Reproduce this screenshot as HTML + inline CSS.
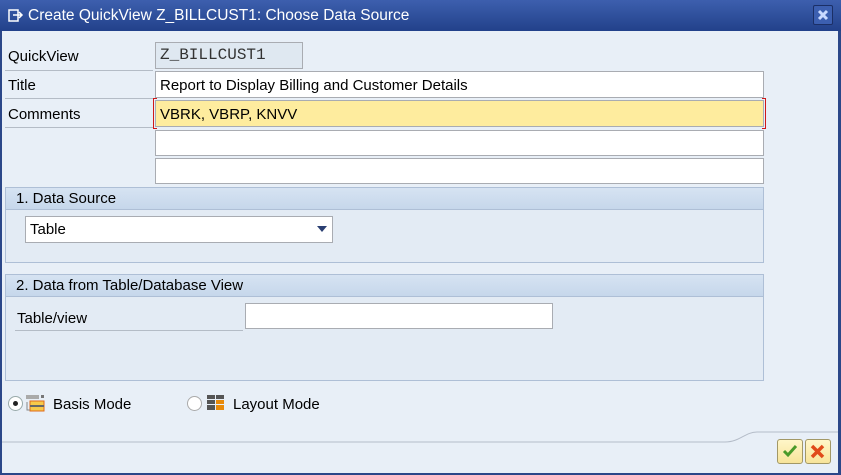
<!DOCTYPE html>
<html><head><style>
*{margin:0;padding:0;box-sizing:border-box}
body{width:841px;height:475px;overflow:hidden;background:#e8eff7;font-family:"Liberation Sans",sans-serif;font-size:14px;color:#000;position:relative}
.a{position:absolute}
.tb{left:0;top:0;width:841px;height:31px;background:linear-gradient(#3d5fae,#22418a);color:#fff;font-size:15.5px;line-height:31px;padding-left:28px}
.lbl{left:8px;font-size:15px}
.line{height:1px;background:#b4bcc6}
.in{background:#fff;border:1px solid #a9acb2;font-size:15px;padding-left:4px;line-height:27px}
.grp{border:1px solid #aebfd6;background:#e3ebf4}
.gh{left:0;right:0;top:0;height:22px;background:linear-gradient(#d6e3f2,#c6d7eb);border-bottom:1px solid #aebfd6;padding-left:10px;line-height:22px;font-size:15px}
.btn{width:26px;height:25px;border:1px solid #a29866;border-radius:3px;background:linear-gradient(#fff6c8,#f7e49a)}
</style></head><body>
<div class="a" style="left:0;top:0;width:2px;height:475px;background:#2b4789"></div>
<div class="a" style="left:838px;top:0;width:3px;height:475px;background:#2b4789"></div>
<div class="a" style="left:0;top:473px;width:841px;height:2px;background:#2b4789"></div>
<div class="a tb">Create QuickView Z_BILLCUST1: Choose Data Source</div>
<svg class="a" style="left:8px;top:9px" width="16" height="14"><rect x="1" y="1" width="9" height="11" fill="none" stroke="#fff" stroke-width="1.5"/><path d="M5 6h9M11 3l3 3-3 3" fill="none" stroke="#fff" stroke-width="1.5"/></svg>
<div class="a" style="left:813px;top:5px;width:20px;height:20px;background:#3c5fb0;border:1px solid #1b2f66;border-radius:2px"></div>
<svg class="a" style="left:817px;top:9px" width="12" height="12"><path d="M2 2l8 8M10 2l-8 8" stroke="#c9d9ff" stroke-width="3"/></svg>

<div class="a lbl" style="top:48px">QuickView</div>
<div class="a line" style="left:5px;top:70px;width:148px"></div>
<div class="a in" style="left:155px;top:42px;width:148px;height:27px;background:#dfe8f1;font-family:'Liberation Mono',monospace;font-size:16px;color:#333;line-height:24px">Z_BILLCUST1</div>
<div class="a lbl" style="top:77px">Title</div>
<div class="a line" style="left:5px;top:98px;width:148px"></div>
<div class="a in" style="left:155px;top:71px;width:609px;height:27px">Report to Display Billing and Customer Details</div>
<div class="a lbl" style="top:106px">Comments</div>
<div class="a line" style="left:5px;top:127px;width:148px"></div>
<div class="a in" style="left:155px;top:100px;width:609px;height:27px;background:#feec9e">VBRK, VBRP, KNVV</div>
<div class="a" style="left:153px;top:98px;width:4px;height:31px;border:1px solid #d01818;border-right:none"></div>
<div class="a" style="left:762px;top:98px;width:4px;height:31px;border:1px solid #d01818;border-left:none"></div>
<div class="a in" style="left:155px;top:130px;width:609px;height:26px"></div>
<div class="a in" style="left:155px;top:158px;width:609px;height:26px"></div>

<div class="a grp" style="left:5px;top:187px;width:759px;height:76px"><div class="a gh">1. Data Source</div></div>
<div class="a in" style="left:25px;top:216px;width:308px;height:27px;line-height:26px">Table</div>
<svg class="a" style="left:317px;top:226px" width="10" height="6"><path d="M0 0h10L5 6z" fill="#2a3f72"/></svg>

<div class="a grp" style="left:5px;top:274px;width:759px;height:107px"><div class="a gh">2. Data from Table/Database View</div></div>
<div class="a" style="left:17px;top:310px;font-size:15px">Table/view</div>
<div class="a line" style="left:15px;top:330px;width:228px"></div>
<div class="a in" style="left:245px;top:303px;width:308px;height:26px"></div>

<div class="a" style="left:8px;top:396px;width:15px;height:15px;border:1px solid #9aa;border-radius:50%;background:#fff"></div>
<div class="a" style="left:13px;top:401px;width:5px;height:5px;border-radius:50%;background:#222"></div>
<svg class="a" style="left:25px;top:394px" width="20" height="18"><rect x="1" y="1" width="13" height="4" fill="#aaa"/><rect x="16" y="1" width="3" height="3" fill="#777"/><rect x="5" y="7" width="14" height="10" fill="#f6c94a" stroke="#e06a1a"/><rect x="5" y="11" width="14" height="2" fill="#666"/><path d="M2 8v8h3" stroke="#888" fill="none"/></svg>
<div class="a" style="left:53px;top:396px;font-size:15px">Basis Mode</div>
<div class="a" style="left:187px;top:396px;width:15px;height:15px;border:1px solid #aaa;border-radius:50%;background:#fff"></div>
<svg class="a" style="left:207px;top:395px" width="18" height="16"><rect x="0" y="0" width="8" height="4" fill="#555"/><rect x="9" y="0" width="8" height="4" fill="#555"/><rect x="0" y="5" width="8" height="4" fill="#555"/><rect x="9" y="5" width="8" height="4" fill="#e88a0a"/><rect x="0" y="10" width="8" height="5" fill="#555"/><rect x="9" y="10" width="8" height="5" fill="#e88a0a"/></svg>
<div class="a" style="left:233px;top:396px;font-size:15px">Layout Mode</div>

<svg class="a" style="left:0;top:425px" width="838" height="20"><path d="M2 17H725C740 17 745 7 757 7H838" fill="none" stroke="#b4bcc8" stroke-width="1"/></svg>
<div class="a btn" style="left:777px;top:439px"></div>
<svg class="a" style="left:782px;top:444px" width="16" height="14"><path d="M2 7l4 4 8-9" fill="none" stroke="#4a9a2a" stroke-width="3"/></svg>
<div class="a btn" style="left:805px;top:439px"></div>
<svg class="a" style="left:810px;top:444px" width="16" height="16"><path d="M2 2l11 11M13 2L2 13" stroke="#e04a1a" stroke-width="3.5"/></svg>
</body></html>
